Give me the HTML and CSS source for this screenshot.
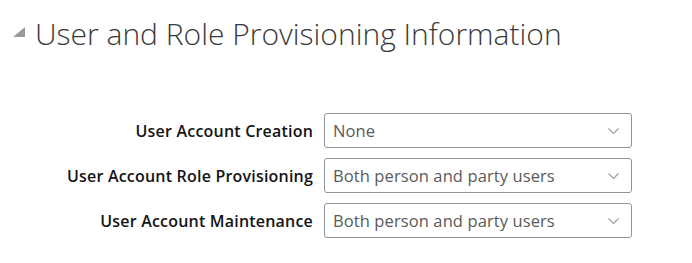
FILE: index.html
```html
<!DOCTYPE html>
<html>
<head>
<meta charset="utf-8">
<link rel="stylesheet" href="styles.css">
</head>
<body>
<div class="page">
  <div class="header">
    <svg class="disclosure" width="12" height="10" viewBox="0 0 12 10"><polygon points="12,0 12,10 0,10" fill="#9a9a9a"/></svg>
    <h1 class="title">User and Role Provisioning Information</h1>
  </div>
  <div class="form">
    <label class="label">User Account Creation</label>
    <div class="select"><span class="value">None</span><svg class="chev" width="11" height="6" viewBox="0 0 11 6"><polyline points="0.5,0.5 5.5,5.5 10.5,0.5" fill="none" stroke="#a0a0a0" stroke-width="1.2"/></svg></div>
    <label class="label">User Account Role Provisioning</label>
    <div class="select"><span class="value">Both person and party users</span><svg class="chev" width="11" height="6" viewBox="0 0 11 6"><polyline points="0.5,0.5 5.5,5.5 10.5,0.5" fill="none" stroke="#a0a0a0" stroke-width="1.2"/></svg></div>
    <label class="label">User Account Maintenance</label>
    <div class="select"><span class="value">Both person and party users</span><svg class="chev" width="11" height="6" viewBox="0 0 11 6"><polyline points="0.5,0.5 5.5,5.5 10.5,0.5" fill="none" stroke="#a0a0a0" stroke-width="1.2"/></svg></div>
  </div>
</div>
</body>
</html>
```
FILE: styles.css
```css
html, body {
  margin: 0;
  padding: 0;
  background: #ffffff;
}
body {
  font-family: "Open Sans", "Noto Sans", sans-serif;
}
.page {
  width: 692px;
  height: 263px;
}
.header {
  display: flex;
  align-items: flex-start;
  padding: 14px 0 0 13px;
}
.disclosure {
  margin-top: 13px;
  margin-right: 10px;
  flex: none;
}
.title {
  margin: 0;
  font-weight: 300;
  font-size: 30px;
  line-height: 40px;
  color: #3a3a3a;
}
.form {
  display: grid;
  grid-template-columns: 313px 308px;
  column-gap: 11px;
  row-gap: 10px;
  margin-top: 59px;
  align-items: center;
}
.label {
  text-align: right;
  font-weight: 600;
  font-size: 16px;
  letter-spacing: 0.2px;
  color: #141414;
  white-space: nowrap;
}
.select {
  box-sizing: border-box;
  height: 35px;
  border: 1px solid #8d959c;
  border-radius: 3px;
  display: flex;
  align-items: center;
  justify-content: space-between;
  padding: 0 12px 0 8px;
}
.value {
  font-size: 16.5px;
  letter-spacing: 0.1px;
  color: #5a5a5a;
}
.chev {
  flex: none;
}
```
